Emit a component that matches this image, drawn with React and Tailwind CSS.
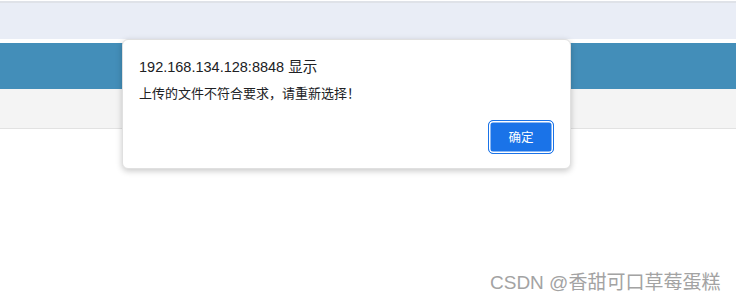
export default function App() {
  return (
    <div className="relative h-[304px] w-[736px] overflow-hidden bg-white font-['Noto_Sans','Noto_Sans_CJK_SC',sans-serif]">
      <div className="h-[1px] bg-white" />
      <div className="h-[2px] bg-[#dfe2e8]" />
      <div className="h-[36px] bg-[#e9edf6]" />
      <div className="h-[4px] bg-white" />
      <div className="h-[46px] bg-[#438eb9]" />
      <div className="h-[40px] border-b border-[#e2e2e2] bg-[#f4f4f4]" />

      {/* alert dialog */}
      <div className="absolute left-[122px] top-[39px] flex h-[130px] w-[449px] flex-col rounded-md border border-[#e0e0e0] bg-white pl-[16px] pr-[16px] pt-[18px] shadow-[0_2px_6px_rgba(0,0,0,0.22)]">
        <div className="text-[14.5px] leading-[18px] text-[#202124] font-['Liberation_Sans','Noto_Sans_CJK_SC',sans-serif]">
          192.168.134.128:8848 显示
        </div>
        <div className="mt-[8px] text-[13px] leading-[18px] text-[#202124] font-['Noto_Sans_CJK_SC',sans-serif]">
          上传的文件不符合要求，请重新选择！
        </div>
        <div className="mb-[14px] mt-auto flex justify-end">
          <button
            type="button"
            className="h-[34px] w-[66px] rounded-[5px] border-[1.5px] border-[#1a73e8] bg-[#1a73e8] text-[12.5px] text-white shadow-[inset_0_0_0_1.5px_white] font-['Noto_Sans_CJK_SC',sans-serif]"
          >
            确定
          </button>
        </div>
      </div>

      <div className="absolute left-[490px] top-[272px] text-[19px] leading-[22px] text-[#a3a3a3] font-['Liberation_Sans','Noto_Sans_CJK_SC',sans-serif]">
        CSDN @香甜可口草莓蛋糕
      </div>
    </div>
  );
}
